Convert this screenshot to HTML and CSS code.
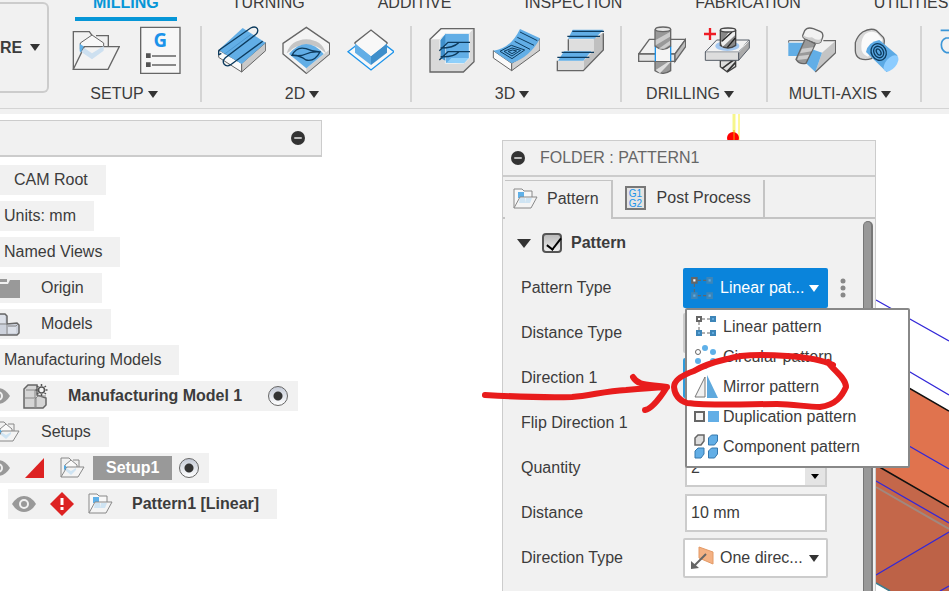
FILE: index.html
```html
<!DOCTYPE html>
<html lang="en">
<head>
    <meta charset="utf-8">
    <title>Manufacture</title>
    <link rel="stylesheet" href="styles.css">
</head>
<body>

<!-- shared icons -->
<svg class="defs" width="0" height="0">
    <symbol id="i-minus" viewBox="0 0 14 14"><circle cx="7" cy="7" r="7" fill="#333"/><rect x="3" y="6" width="8" height="2" rx="1" fill="#bbb"/></symbol>
    <symbol id="i-eye" viewBox="0 0 24 16"><path d="M0 8Q5 0 12 0T24 8Q19 16 12 16T0 8Z" fill="#999"/><circle cx="12" cy="8" r="4" fill="#999" stroke="#f1f1f1" stroke-width="2"/></symbol>
    <symbol id="i-setup" viewBox="0 0 25 22">
        <path d="M1 20V1h8l2 2M13 3h6v7" fill="none" stroke="#888"/>
        <path d="M5 8l6-5 6 5v3H5z" fill="#fafafa" stroke="#888"/><path d="M4 8l3 2-2 4-1-2z" fill="#4fa8e2"/>
        <path d="M1 20L7 10h17l-6 10z" fill="#f4f4f4" stroke="#888"/><path d="M6 11l5 3 5-3v2l-5 5-5-4z" fill="#cfe4f3"/>
    </symbol>
    <symbol id="i-pattern" viewBox="0 0 25 22">
        <path d="M1 20V1h8l2 2h8v7" fill="#f8f8f8" stroke="#888"/><path d="M5 4h6v6H5z" fill="#5fb0e8"/>
        <path d="M1 20L7 9h17l-6 11z" fill="#f4f4f4" stroke="#888"/><path d="M7 10h5v5H6zM13 10h6l-2 5h-5z" fill="#cfe4f3"/>
    </symbol>
    <symbol id="i-linear" viewBox="0 0 22 22">
        <path d="M7 4h8M4 7v8M7 18h8" stroke="#666" stroke-dasharray="3 2"/>
        <path d="M2 2h4v4H2z" fill="#fff" stroke="#666" stroke-width="2"/>
        <path d="M16 2h4v4h-4zM2 16h4v4H2zM16 16h4v4h-4z" fill="#5fa9dd" stroke="#3d85b8" stroke-width="2"/>
    </symbol>
</svg>

<header class="ribbon">
    <button class="workspace">RE <i class="caret"></i></button>
    <div class="ribbon-main">
        <nav class="tabs">
            <a href="#" class="active">MILLING</a>
            <a href="#">TURNING</a>
            <a href="#">ADDITIVE</a>
            <a href="#">INSPECTION</a>
            <a href="#">FABRICATION</a>
            <a href="#">UTILITIES</a>
        </nav>
        <div class="groups">
            <div class="group group-setup">
                <div class="tools">
                    <svg viewBox="0 0 144 144">
                        <path d="M4 130V17H52L60 28M72 29H109V60" fill="none" stroke="#666" stroke-width="4"/>
                        <path d="M25 51L60 27L95 51V70H25Z" fill="#f8f8f8" stroke="#666" stroke-width="3"/>
                        <path d="M23 53L37 62L28 80L23 76Z" fill="#5fb0e8"/>
                        <path d="M4 130L37 62H142L108 130Z" fill="#f3f3f3" stroke="#666" stroke-width="4"/>
                        <path d="M36 65L60 82L95 60V74L60 100L28 78Z" fill="#cde0f0"/>
                    </svg>
                    <svg viewBox="0 0 144 144">
                        <path d="M14 4H132V142H14Z" fill="#f7f7f7" stroke="#666" stroke-width="4"/>
                        <text x="73" y="64" class="g-code">G</text>
                        <path d="M30 82h14v14H30zM30 109h14v14H30z" fill="#555"/>
                        <path d="M48 90H120M48 117H120" stroke="#666" stroke-width="4"/>
                    </svg>
                </div>
                <button class="group-name">SETUP <i class="caret"></i></button>
            </div>
            <div class="group">
                <div class="tools">
                    <svg viewBox="0 0 144 144">
                        <path d="M2 72L71 112V138L2 94Z" fill="#fafafa" stroke="#666" stroke-width="3"/>
                        <path d="M143 50V74L71 138V112Z" fill="#c9c9c9" stroke="#666" stroke-width="3"/>
                        <path d="M2 72L74 6L143 50L71 114Z" fill="#62aee6"/>
                        <path d="M3 88Q-2 76 8 69L98 6Q112 -1 118 8Q122 17 114 25L22 95Q12 105 18 114Q26 124 38 116L134 46M3 86L10 82" fill="none" stroke="#0d3b5e" stroke-width="4"/>
                        <path d="M20 84L98 26" stroke="#4d97cf" stroke-width="3"/>
                    </svg>
                    <svg viewBox="0 0 144 144">
                        <path d="M3 52L73 4L143 52V84L73 142L3 84Z" fill="#f4f4f4" stroke="#666" stroke-width="4"/>
                        <path d="M73 142V126L141 72V84Z" fill="#d0d0d0"/>
                        <path d="M14 82Q26 42 73 40Q120 42 132 82L122 74Q106 56 73 56Q40 56 24 76Z" fill="#c5c5c5"/>
                        <path d="M21 84Q46 54 73 54Q100 54 125 84L73 127Z" fill="#62aee6"/>
                        <path d="M30 88Q44 60 72 68Q94 78 114 78Q98 108 72 102Q50 86 30 88ZM30 88Q56 92 72 84T114 78" fill="none" stroke="#0d3b5e" stroke-width="4"/>
                    </svg>
                    <svg viewBox="0 0 144 144">
                        <path d="M6 77L75 24L144 77L75 132Z" fill="#f8f8f8" stroke="#1c93ea" stroke-width="4"/>
                        <path d="M27 52L75 90V117L27 80Z" fill="#62aee6"/>
                        <path d="M123 52L75 90V117L123 80Z" fill="#3f8fcb"/>
                        <path d="M75 12L123 52L75 90L27 52Z" fill="#f8f8f8"/>
                        <path d="M27 54V50L75 12L123 50V54" fill="none" stroke="#666" stroke-width="4"/>
                    </svg>
                </div>
                <button class="group-name">2D <i class="caret"></i></button>
            </div>
            <div class="group">
                <div class="tools">
                    <svg viewBox="0 0 144 144">
                        <path d="M6 40L39 8H138V107L106 138H6Z" fill="#d9d9d9" stroke="#666" stroke-width="4"/>
                        <path d="M10 40L40 11H134L124 22H52L36 40Z" fill="#fafafa"/>
                        <path d="M36 42L52 22H124V96L108 112H52V60L36 70Z" fill="#62aee6" stroke="#f4f4f4" stroke-width="3"/>
                        <path d="M38 42L52 26V104L38 96Z" fill="#3f8fcb"/>
                        <path d="M56 110L70 96H122L108 112Z" fill="#8fd0fb"/>
                        <path d="M34 74L60 49H126M38 66Q76 66 92 50M34 102L60 77H126M38 92Q76 94 92 78" fill="none" stroke="#0d3b5e" stroke-width="4"/>
                    </svg>
                    <svg viewBox="0 0 144 144">
                        <path d="M4 74L59 112V134L4 96Z" fill="#fafafa" stroke="#666" stroke-width="3"/>
                        <path d="M59 112Q110 84 144 37V72L59 134Z" fill="#d0d0d0" stroke="#666" stroke-width="3"/>
                        <path d="M4 74Q56 68 84 9L144 37Q116 92 59 112Z" fill="#62aee6"/>
                        <path d="M24 76L58 58L98 72L60 98ZM36 76L60 66L86 73L60 90ZM48 76L62 72L74 75L60 83ZM84 18L136 44M76 34L126 58M68 46L114 70" fill="none" stroke="#0d3b5e" stroke-width="3"/>
                    </svg>
                    <svg viewBox="0 0 144 144">
                        <path d="M142 20V72L82 134V104L112 74V40Z" fill="#c0c0c0"/>
                        <path d="M37 40H114V76H37ZM4 105H84V134H4Z" fill="#dedede"/>
                        <path d="M50 11H142L116 38H36ZM24 76H106L82 104H6Z" fill="#62aee6"/>
                        <path d="M142 22V72L82 134H4V104M37 40V74" fill="none" stroke="#666" stroke-width="4"/>
                        <path d="M49 16H147M34 31H132M17 79H114M4 94H100" stroke="#0d3b5e" stroke-width="4"/>
                    </svg>
                </div>
                <button class="group-name">3D <i class="caret"></i></button>
            </div>
            <div class="group">
                <div class="tools">
                    <svg viewBox="0 0 144 144">
                        <path d="M51 100H98V134Q75 150 51 134Z" fill="#999" stroke="#666" stroke-width="4"/>
                        <path d="M53 132L90 108H98L66 142Z" fill="#ddd"/>
                        <path d="M34 40H143L111 84H2Z" fill="#f2f2f2" stroke="#666" stroke-width="4"/>
                        <path d="M2 84H111V106H2Z" fill="#e4e4e4" stroke="#666" stroke-width="4"/>
                        <path d="M143 40V62L111 106V84Z" fill="#bbb" stroke="#666" stroke-width="4"/>
                        <path d="M51 60H98V105H51Z" fill="#f4f4f4"/><path d="M52 60V106M98 60V106" stroke="#1c93ea" stroke-width="4"/>
                        <path d="M51 10V60Q75 80 98 60V10" fill="#999" stroke="#666" stroke-width="4"/>
                        <path d="M53 42L96 18V32L53 58ZM62 68L96 44V56L78 68Z" fill="#ccc"/>
                        <ellipse cx="75" cy="10" rx="23" ry="7" fill="#e8e8e8" stroke="#666" stroke-width="4"/>
                    </svg>
                    <svg viewBox="0 0 144 144">
                        <path d="M55 104H101V122L76 138L55 122Z" fill="#ddd" stroke="#444" stroke-width="4"/>
                        <path d="M60 128L92 104M76 136L100 110" stroke="#333" stroke-width="5"/>
                        <path d="M44 42H142L110 78H10Z" fill="#f2f2f2" stroke="#555c66" stroke-width="3"/>
                        <path d="M10 78H110V103H10Z" fill="#ddd" stroke="#555c66" stroke-width="3"/>
                        <path d="M142 42V66L110 103V78Z" fill="#aaa" stroke="#555c66" stroke-width="3"/>
                        <path d="M12 78H110L141 44" fill="none" stroke="#eee" stroke-width="3"/>
                        <ellipse cx="76" cy="60" rx="36" ry="15" fill="#a4c8f0"/>
                        <path d="M55 12V58Q78 74 101 58V12" fill="#888" stroke="#444" stroke-width="4"/>
                        <path d="M84 14H99V28L62 62L57 50Z" fill="#eee"/><path d="M60 46L90 18M76 64L100 36" stroke="#222" stroke-width="4"/>
                        <ellipse cx="78" cy="12" rx="23" ry="6" fill="#eee" stroke="#444" stroke-width="4"/>
                        <path d="M24 6V42M6 24H42" stroke="#ee1c25" stroke-width="7"/>
                    </svg>
                </div>
                <button class="group-name">DRILLING <i class="caret"></i></button>
            </div>
            <div class="group group-wide">
                <div class="tools">
                    <svg viewBox="0 0 144 144">
                        <path d="M1 50H46L30 90H1Z" fill="#62aee6"/><path d="M2 50V44H50" fill="none" stroke="#666" stroke-width="3"/>
                        <path d="M82 138L143 80V44L102 80Z" fill="#c4c4c4"/>
                        <path d="M62 66L102 80L82 138L50 108Z" fill="#62aee6"/>
                        <path d="M106 44H143V80L82 138" fill="none" stroke="#666" stroke-width="4"/>
                        <path d="M52 38L24 100Q34 116 54 112L82 54Z" fill="#999" stroke="#666" stroke-width="4"/>
                        <path d="M42 68L76 64L70 76L36 82ZM32 90L64 86L58 98L28 102Z" fill="#ccc"/>
                        <path d="M50 14Q58 2 76 8L98 17Q108 23 103 36L98 48Q92 54 80 50L50 38Q42 34 45 26Z" fill="#f2f2f2" stroke="#666" stroke-width="4"/>
                        <path d="M47 27Q52 36 72 34Q92 48 101 36L98 48Q92 53 80 49L50 37Q43 33 47 27Z" fill="#ccc"/>
                    </svg>
                    <svg viewBox="0 0 144 144">
                        <path d="M32 18Q56 4 74 14L94 34Q100 44 94 60L58 98Q40 104 24 98Q10 90 10 74V50Q16 30 32 18Z" fill="#d8d8d8" stroke="#666" stroke-width="4"/>
                        <path d="M40 24Q58 12 76 22L92 42L48 92Q26 84 28 60Q28 36 40 24Z" fill="#fafafa"/>
                        <path d="M42 78Q48 48 82 42L136 88Q140 116 104 138Z" fill="#5ba9e4"/>
                        <ellipse cx="117" cy="112" rx="16" ry="29" transform="rotate(40 117 112)" fill="#8cccff"/>
                        <g transform="rotate(-30 80 78)" fill="none" stroke="#0d3b5e" stroke-width="4"><ellipse cx="80" cy="78" rx="22" ry="26"/><ellipse cx="80" cy="78" rx="14" ry="18"/><ellipse cx="80" cy="78" rx="6" ry="10"/></g>
                    </svg>
                </div>
                <button class="group-name">MULTI-AXIS <i class="caret"></i></button>
            </div>
            <div class="group">
                <div class="tools">
                    <svg viewBox="0 0 144 144"><path d="M8 13H80M60 36H24Q10 42 10 56Q10 74 26 80H60" fill="none" stroke="#3b96d8" stroke-width="5"/></svg>
                </div>
            </div>
        </div>
    </div>
</header>

<main class="workarea">
    <!-- model canvas -->
    <svg class="scene" viewBox="0 114 949 477" preserveAspectRatio="xMaxYMin slice">
        <path d="M734 114V140" stroke="#f6f68c" stroke-width="3"/><path d="M739 114V140" stroke="#fbf23a" stroke-width="1"/>
        <circle cx="733" cy="138" r="6" fill="#f00"/><path d="M734 130V140" stroke="#f5a000"/>
        <path d="M876 369L949 411V591H889L876 583Z" fill="#c4674a"/>
        <path d="M949 532L876 575V583L889 591H949Z" fill="#bd6247"/>
        <path d="M876 369L949 411V507L876 465Z" fill="#e0734e"/>
        <path d="M876 369L949 411M876 465L949 507" stroke="#111" stroke-width="1.5"/>
        <path d="M876 487L949 529" stroke="#a08880" stroke-width="2"/>
        <path d="M876 300L949 341M876 352L949 395M876 427L949 469M876 481L949 523M876 575L949 532M940 591L949 586" stroke="#3328d8" stroke-width="1.3"/>
        <path d="M876 583L890 591" stroke="#3d7d90" stroke-width="1.5"/>
    </svg>

    <section class="browser">
        <div class="browser-head"><svg class="i14"><use href="#i-minus"/></svg></div>
        <ul class="tree">
            <li class="root">CAM Root</li>
            <li>Units: mm</li>
            <li>Named Views</li>
            <li class="sub"><svg width="20" height="20"><path d="M0 1h7v3H0zM0 6h8l2-4h10v18H0z" fill="#999"/></svg>Origin</li>
            <li class="sub"><svg width="20" height="24" viewBox="0 0 20 24"><path d="M-6 2H5l2 2v8l10-1 2 2v8l-2 2H-6z" fill="#cdd2dc" stroke="#666" stroke-width="1.5"/><path d="M7 12v10M-2 12h9M8 14h8l2-2" stroke="#888" fill="none"/><path d="M0 3h5v8H0zM8 15h8v6H8z" fill="#dde1e9"/></svg>Models</li>
            <li>Manufacturing Models</li>
            <li class="bold wide">
                <svg class="eye-cut" viewBox="14 0 10 16"><use href="#i-eye" width="24" height="16"/></svg>
                <svg class="part" viewBox="0 0 25 25"><path d="M1 5l4-4h9v10l9 3v7l-3 3H1z" fill="#d5d5d5" stroke="#666" stroke-width="1.5"/><path d="M1 14h12v10M12 24v-9l3-3h8M3 6h10M12 6v8" fill="none" stroke="#888"/><circle cx="18.500" cy="6" r="3" fill="#f4f4f4" stroke="#555" stroke-width="1.500"/><path d="M18.500 0v2M18.500 10v2M12.500 6h2M22.500 6h2M14 2l1.500 1M21.500 9l1.500 1M23 2l-1.500 1M14 10l1.500-1" stroke="#555" stroke-width="1.500"/></svg>
                <label for="model1">Manufacturing Model 1</label>
                <input type="radio" id="model1" name="model" checked>
            </li>
            <li class="sub"><svg width="20" height="22" viewBox="5 0 20 22"><use href="#i-setup" width="25" height="22"/></svg>Setups</li>
            <li class="bold setup-row">
                <svg class="eye-cut" viewBox="14 0 10 16"><use href="#i-eye" width="24" height="16"/></svg>
                <svg class="flag" viewBox="0 0 20 20"><path d="M0 20L19 0V20Z" fill="#dd2222"/></svg>
                <svg class="i25"><use href="#i-setup"/></svg>
                <label for="setup1" class="chip">Setup1</label>
                <input type="radio" id="setup1" name="setup" checked>
            </li>
            <li class="bold pattern-row">
                <svg class="eye"><use href="#i-eye"/></svg>
                <svg class="warn" viewBox="0 0 24 24"><path d="M12 0L24 12L12 24L0 12Z" fill="#dd2222"/><path d="M12 6V13M12 15V18" stroke="#fff" stroke-width="3"/></svg>
                <svg class="i25"><use href="#i-pattern"/></svg>
                <span>Pattern1 [Linear]</span>
            </li>
        </ul>
    </section>

    <section class="dialog">
        <div class="dialog-head"><svg class="i14"><use href="#i-minus"/></svg>FOLDER : PATTERN1</div>
        <div class="dialog-tabs">
            <button class="active"><svg class="i25"><use href="#i-pattern"/></svg>Pattern</button>
            <button><svg class="post" viewBox="0 0 21 24"><path d="M1 1H20V23H1Z" fill="#e4e4e4" stroke="#777" stroke-width="2"/><text x="10.500" y="11">G1</text><text x="10.500" y="21">G2</text></svg>Post Process</button>
        </div>
        <div class="dialog-body">
            <form class="fields">
                <div class="field-title">
                    <i class="caret"></i>
                    <input type="checkbox" id="pattern_on" checked>
                    <label for="pattern_on">Pattern</label>
                </div>
                <div class="field">
                    <label for="pattern_type">Pattern Type</label>
                    <div class="pick open">
                        <svg class="pick-icon"><use href="#i-linear"/></svg>
                        <select id="pattern_type"><option>Linear pat...</option></select>
                        <i class="caret"></i>
                        <ul class="menu">
                            <li><svg class="i25" viewBox="0 0 25 25"><use href="#i-linear" x="1" y="1" width="22" height="22"/></svg>Linear pattern</li>
                            <li><svg class="i25" viewBox="0 0 25 25"><circle cx="4" cy="8" r="2.500" fill="#fff" stroke="#666"/><g fill="#5fb0e8"><circle cx="11" cy="4" r="3"/><circle cx="19" cy="8" r="3"/><circle cx="4" cy="17" r="3"/><circle cx="11" cy="22" r="3"/><circle cx="19" cy="17" r="3"/></g></svg>Circular pattern</li>
                            <li><svg class="i25" viewBox="0 0 25 25"><path d="M11 3V23H1Z" fill="#f1f1f1" stroke="#777"/><path d="M13 1L24 24H13Z" fill="#5fa9dd"/></svg>Mirror pattern</li>
                            <li><svg class="i25" viewBox="0 0 25 25"><path d="M1 8H10V17H1Z" fill="#f4f4f4" stroke="#666" stroke-width="2"/><path d="M14 7H25V18H14Z" fill="#62aee6"/></svg>Duplication pattern</li>
                            <li><svg class="i25" viewBox="0 0 25 25"><path d="M1 4l3-3h6v6l-3 4H1z" fill="#ddd" stroke="#666" stroke-width="1.500"/><g fill="#62aee6" stroke="#3578ad"><path id="cube" d="M14.500 4l3-3h6v6l-3 4h-6z"/><use href="#cube" y="13"/><use href="#cube" x="-13.500" y="13"/></g></svg>Component pattern</li>
                        </ul>
                    </div>
                    <button type="button" class="more" aria-label="More"><svg viewBox="0 0 6 20"><circle cx="3" cy="3" r="2.500"/><circle cx="3" cy="10" r="2.500"/><circle cx="3" cy="17" r="2.500"/></svg></button>
                </div>
                <div class="field">
                    <label for="distance_type">Distance Type</label>
                    <div class="pick"><select id="distance_type"></select></div>
                </div>
                <div class="field">
                    <label for="direction1">Direction 1</label>
                    <div class="pick focus"><select id="direction1"></select></div>
                </div>
                <div class="field">
                    <label for="flip1">Flip Direction 1</label>
                    <input type="checkbox" id="flip1">
                </div>
                <div class="field">
                    <label for="quantity">Quantity</label>
                    <div class="spin"><input type="text" id="quantity" value="2"><span class="spin-btns"><button type="button" aria-label="Up"><i class="caret up"></i></button><button type="button" aria-label="Down"><i class="caret"></i></button></span></div>
                </div>
                <div class="field">
                    <label for="distance">Distance</label>
                    <input type="text" class="text" id="distance" value="10 mm">
                </div>
                <div class="field">
                    <label for="direction_type">Direction Type</label>
                    <div class="pick">
                        <svg class="pick-icon" viewBox="0 0 24 24"><path d="M9 1L23 6V18L9 12Z" fill="#f4b183" stroke="#e39a66"/><path d="M16 8L4 20" stroke="#666" stroke-width="2"/><path d="M1 23V15L9 22Z" fill="#666"/></svg>
                        <select id="direction_type"><option>One direc...</option></select>
                        <i class="caret"></i>
                    </div>
                </div>
            </form>
            <div class="scroll"></div>
        </div>
    </section>
</main>

<!-- hand drawn callout -->
<svg class="callout" viewBox="0 0 949 591" width="949" height="591">
    <path d="M485 395Q540 398 572 397C590 396 604 391 626 390Q650 388 667 387M633 377C638 386 648 384 667 387C662 395 652 409 645 410" stroke-width="6"/>
    <path d="M833 365C820 359 804 357 787 356C760 354 738 355 727 359C714 362 704 365 694 371Q674 378 674 387Q675 399 687 403C712 406 750 404 777 404C794 404 806 407 820 407C836 405 842 396 846 387C846 378 834 371 828 362" stroke-width="6"/>
</svg>

</body>
</html>
```
FILE: styles.css
```css
*{ box-sizing: border-box;}
body{
    margin: 0;
    height: 100vh;
    display: flex;
    flex-direction: column;
    position: relative;
    overflow: hidden;
    background: #fff;
    color: #3c3c3c;
    font: 16px/20px "Liberation Sans", Arial, sans-serif;
}
button,input,select{ font: inherit;color: inherit;}
button{ padding: 0;border: 0;background: none;}
ul{ margin: 0;padding: 0;list-style: none;}
svg{ flex: none;}
.defs{ position: absolute;}
.i14{ width: 14px;height: 14px;}
.i25{ width: 25px;height: 24px;}
.caret{
    display: inline-block;
    border: solid 5px transparent;
    border-top: solid 7px #333;
    border-bottom: 0;
}
.caret.up{ transform: rotate(180deg);}

/* ribbon */
.ribbon{ flex: none;display: flex;height: 114px;background: #f1f1f1;overflow: hidden;box-shadow: inset 0 -5px 0 #f1f1f1, inset 0 -6px 0 #d4d4d4;}
.workspace{
    flex: none;
    display: flex;
    align-items: center;
    gap: 8px;
    width: 49px;
    height: 91px;
    margin-top: 2px;
    border: solid 2px #ccc;
    border-left: 0;
    border-radius: 0 6px 6px 0;
    font-weight: bold;
}
.tabs{ display: flex;gap: 37px;height: 21px;padding-left: 26px;}
.tabs a{ flex: none;height: 21px;padding: 0 18px;line-height: 6px;color: #3c3c3c;text-decoration: none;}
.tabs .active{ font-weight: bold;color: #0696d7;border-bottom: solid 4px #0696d7;}
.groups{ display: flex;padding-top: 5px;}
.group{ flex: none;height: 76px;padding: 0 16px;border-right: solid 2px #d4d4d4;}
.group-setup{ padding-left: 23px;}
.group-wide{ padding: 0 20px;}
.tools{ display: flex;gap: 16px;}
.tools svg{ width: 48px;height: 48px;}
.group-name{ display: flex;justify-content: center;align-items: center;gap: 4px;width: 100%;height: 20px;margin-top: 10px;padding-right: 8px;}
.g-code{ font: bold 56px "Noto Sans", sans-serif;fill: #1c93ea;text-anchor: middle;}

/* work area */
.workarea{ flex: 1;min-height: 0;display: flex;justify-content: space-between;align-items: flex-start;padding-right: 73px;position: relative;}
.scene{ position: absolute;top: 0;left: 0;width: 100%;height: 100%;}
.browser{ width: 322px;padding-top: 6px;position: relative;}
.browser-head{
    display: flex;
    align-items: center;
    justify-content: flex-end;
    height: 37px;
    padding-right: 16px;
    background: #f1f1f1;
    border: solid 1px #ccc;
    border-width: 1px 1px 2px 0;
}
.tree{ display: flex;flex-direction: column;align-items: flex-start;gap: 6px;padding-top: 8px;}
.tree li{ display: flex;align-items: center;height: 30px;padding: 0 18px 0 4px;background: #f1f1f1;}
.tree .root{ padding-left: 14px;}
.tree .sub{ gap: 21px;padding-left: 0;}
.tree .bold{ font-weight: bold;}
.tree .wide{ gap: 20px;padding: 0 10px 0 0;}
.eye-cut{ width: 10px;height: 16px;}
.wide .eye-cut{ margin-right: -7px;}
.wide label{ padding-right: 6px;}
.part{ width: 25px;height: 25px;}
.tree .setup-row{ gap: 15px;padding: 0 10px 0 0;}
.flag{ width: 20px;height: 20px;}
.chip{ margin: 0 -8px 0 -7px;padding: 2px 13px;background: #999;color: #fff;}
.tree .pattern-row{ gap: 14px;margin-left: 8px;padding-left: 4px;}
.eye{ width: 24px;height: 16px;}
.warn{ width: 24px;height: 24px;}
.pattern-row span{ padding-left: 5px;}
.tree input{
    appearance: none;
    width: 20px;
    height: 20px;
    margin: 0;
    border: solid 1px #666;
    border-radius: 50%;
    background: radial-gradient(circle, #333 0 4px, transparent 5px), linear-gradient(#c4cad6, #fff);
}

/* pattern dialog */
.dialog{ align-self: stretch;display: flex;flex-direction: column;width: 374px;margin-top: 26px;position: relative;background: #f1f1f1;}
.dialog-head{ flex: none;display: flex;align-items: center;gap: 15px;height: 37px;padding-left: 8px;border: solid 1px #ccc;border-width: 1px 1px 2px;color: #666;}
.dialog-tabs{ flex: none;display: flex;height: 42px;padding: 3px 0 0 2px;border: solid 1px #ccc;border-width: 0 1px;box-shadow: inset 0 -2px 0 #c4c4c4;}
.dialog-tabs button{ display: flex;align-items: center;gap: 11px;padding: 0 12px 3px 12px;border-right: solid 2px #c4c4c4;}
.dialog-tabs .active{ gap: 9px;padding-left: 8px;background: #f1f1f1;border-top: solid 1px #c4c4c4;}
.post{ width: 21px;height: 24px;}
.post text{ font: 10px "Liberation Sans", sans-serif;fill: #1c93ea;text-anchor: middle;}
.dialog-body{ flex: 1;display: flex;justify-content: space-between;padding: 2px 2px 0 0;border: solid 1px #ccc;border-width: 0 1px;}
.fields{ flex: 1;padding-left: 18px;}
.field-title{ display: flex;align-items: center;height: 44px;font-weight: bold;}
.field-title .caret{ border-width: 9px 7px 0;margin: 0 11px 0 -4px;}
.field-title label{ padding-left: 9px;}
.fields input[type=checkbox]{ appearance: none;width: 20px;height: 20px;margin: 0;border: solid 2px #555;border-radius: 4px;background: linear-gradient(#bbb, #eee);position: relative;}
.fields input[type=checkbox]:checked::after{
    content: "";
    position: absolute;
    left: 6px;
    top: 0;
    width: 6px;
    height: 13px;
    border: solid #000;
    border-width: 0 2px 2px 0;
    transform: rotate(38deg);
}
.fields .field input[type=checkbox]{ margin-left: 8px;}
.field{ display: grid;grid-template-columns: 162px 145px 30px;align-items: center;height: 45px;}
.pick{ position: relative;height: 40px;}
.pick select{ appearance: none;width: 100%;height: 40px;padding: 0 16px 0 35px;border: solid 2px #ccc;border-radius: 2px;background: #fff;}
.pick .caret{ position: absolute;right: 9px;top: 17px;pointer-events: none;}
.pick-icon{ position: absolute;left: 7px;top: 8px;width: 24px;height: 24px;}
.open select{ background: #0a84db;border-color: #0a84db;color: #fff;}
.open .caret{ border-top-color: #fff;}
.focus select{ border-color: #2f9bdc;}
.pick > svg{ pointer-events: none;z-index: 1;}
.menu{ position: absolute;z-index: 5;left: 2px;top: 40px;width: 225px;padding: 2px 0 4px;background: #fff;border: solid 2px #888;border-radius: 2px;}
.menu li{ display: flex;align-items: center;gap: 4px;height: 30px;padding-left: 7px;}
.menu .i25{ height: 25px;}
.more{ width: 30px;height: 30px;}
.more svg{ width: 6px;height: 20px;fill: #888;display: block;margin: 0 auto;}
.text,.spin{ width: 142px;height: 38px;margin-left: 2px;padding: 0 4px;border: solid 2px #ccc;background: #fff;}
.spin{ display: flex;padding-right: 0;}
.spin input{ width: 100%;min-width: 0;border: 0;padding: 0;background: none;}
.spin-btns{ flex: none;display: flex;flex-direction: column;width: 20px;}
.spin-btns button{ flex: 1;display: flex;align-items: center;justify-content: center;background: #e4e4e4;}
.spin-btns .caret{ border-width: 5px 4px 0;border-top-color: #000;}
.scroll{ width: 10px;border: solid 1px #777;border-width: 1px 2px 0 1px;border-radius: 5px 5px 0 0;background: #999;}

.callout{ position: absolute;top: 0;left: 0;z-index: 10;pointer-events: none;fill: none;stroke: #e81c1c;stroke-linecap: round;stroke-linejoin: round;}
```
